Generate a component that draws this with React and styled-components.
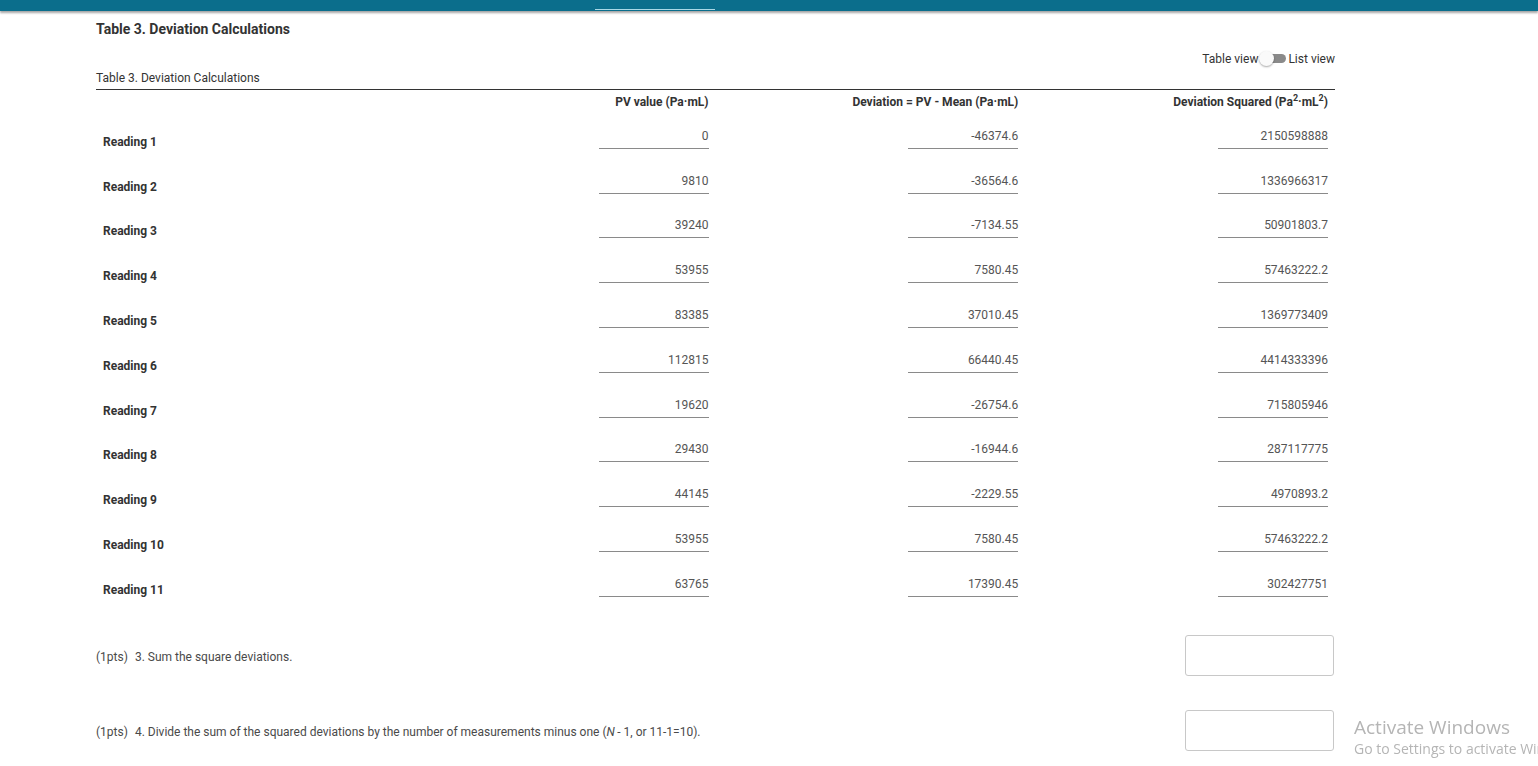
import React from "react";
import styled, { createGlobalStyle } from "styled-components";

const rows = [
  ["0", "-46374.6", "2150598888"],
  ["9810", "-36564.6", "1336966317"],
  ["39240", "-7134.55", "50901803.7"],
  ["53955", "7580.45", "57463222.2"],
  ["83385", "37010.45", "1369773409"],
  ["112815", "66440.45", "4414333396"],
  ["19620", "-26754.6", "715805946"],
  ["29430", "-16944.6", "287117775"],
  ["44145", "-2229.55", "4970893.2"],
  ["53955", "7580.45", "57463222.2"],
  ["63765", "17390.45", "302427751"],
];

const GlobalStyle = createGlobalStyle`
  body {
    margin: 0;
    font-family: Roboto, "Liberation Sans", sans-serif;
    color: #333;
    background: #fff;
    overflow: hidden;
  }
`;

const TopBar = styled.div`
  height: 11px;
  background: #0b6e8c;
  box-shadow: 0 2px 2px rgba(0, 0, 0, 0.35);
  display: flex;
  padding-left: 595px;
  box-sizing: border-box;
  align-items: flex-end;
`;

const TabMark = styled.div`
  width: 120px;
  height: 1px;
  margin-bottom: 1px;
  background: #a9d8e6;
`;

const Page = styled.div`
  width: 1239px;
  margin-left: 96px;
`;

const Title = styled.h2`
  margin: 10px 0 0;
  font-size: 14px;
  font-weight: 700;
  line-height: 16px;
  color: #333;
`;

const ToggleRow = styled.div`
  display: flex;
  justify-content: flex-end;
  align-items: center;
  margin-top: 14px;
  font-size: 12px;
  color: #333;
  line-height: 14px;
`;

const Switch = styled.span`
  position: relative;
  width: 27px;
  height: 15px;
  display: inline-block;
  margin: 0 2px 0 1px;

  &::before {
    content: "";
    position: absolute;
    left: 4px;
    top: 3px;
    width: 23px;
    height: 9px;
    border-radius: 5px;
    background: #8a8a8a;
  }

  &::after {
    content: "";
    position: absolute;
    left: 0;
    top: 0;
    width: 15px;
    height: 15px;
    border-radius: 50%;
    background: #fafafa;
    box-shadow: 0 1px 2px rgba(0, 0, 0, 0.35);
  }
`;

const Table = styled.table`
  width: 100%;
  border-collapse: collapse;
  table-layout: fixed;
  margin-top: 5px;

  caption {
    text-align: left;
    font-size: 12px;
    line-height: 14px;
    padding-bottom: 4px;
    border-bottom: 1px solid #333;
  }
`;

const Th = styled.th`
  font-size: 12px;
  font-weight: 700;
  text-align: right;
  padding: 5px 7px 0;
  height: 14px;
  line-height: 14px;
  color: #333;

  sup {
    font-size: 9px;
    line-height: 0;
  }
`;

const Row = styled.tr`
  height: 44.8px;
`;

const Label = styled.th`
  font-size: 12px;
  font-weight: 700;
  text-align: left;
  padding: 0 7px 5px;
  vertical-align: bottom;
  color: #333;
  line-height: 14px;
`;

const Cell = styled.td`
  padding: 0 7px 5px;
  vertical-align: bottom;
`;

const Value = styled.div`
  width: 110px;
  margin-left: auto;
  font-size: 12px;
  line-height: 14px;
  color: #555;
  padding-top: 1px;
  padding-bottom: 5px;
  border-bottom: 1px solid #8a8a8a;
  text-align: right;
`;

const Question = styled.div`
  display: flex;
  justify-content: space-between;
  align-items: center;
  margin-top: ${(p) => p.$top}px;
  font-size: 12px;
  color: #4a4a4a;
`;

const Prompt = styled.span`
  padding-top: 4px;
`;

const Pts = styled.span`
  margin-right: 7px;
`;

const Answer = styled.input`
  width: 149px;
  height: 41px;
  box-sizing: border-box;
  border: 1px solid #c8c8c8;
  border-radius: 3px;
  margin-right: 1px;
`;

const Watermark = styled.div`
  position: fixed;
  left: 1354px;
  top: 715px;
  font-family: "Open Sans", "Noto Sans", sans-serif;
  color: #b5b5b5;
  white-space: nowrap;

  div:first-child {
    font-size: 19px;
    line-height: 24px;
  }
  div:last-child {
    font-size: 14px;
    line-height: 20px;
  }
`;

export default function App() {
  return (
    <>
      <GlobalStyle />
      <TopBar>
        <TabMark />
      </TopBar>
      <Page>
        <Title>Table 3. Deviation Calculations</Title>
        <ToggleRow>
          Table view
          <Switch />
          List view
        </ToggleRow>
        <Table>
          <caption>Table 3. Deviation Calculations</caption>
          <thead>
            <tr>
              <Th />
              <Th>PV value (Pa·mL)</Th>
              <Th>Deviation = PV - Mean (Pa·mL)</Th>
              <Th>
                Deviation Squared (Pa<sup>2</sup>·mL<sup>2</sup>)
              </Th>
            </tr>
          </thead>
          <tbody>
            {rows.map((r, i) => (
              <Row key={i}>
                <Label>Reading {i + 1}</Label>
                {r.map((v, j) => (
                  <Cell key={j}>
                    <Value>{v}</Value>
                  </Cell>
                ))}
              </Row>
            ))}
          </tbody>
        </Table>
        <Question $top={33}>
          <Prompt>
            <Pts>(1pts)</Pts>3. Sum the square deviations.
          </Prompt>
          <Answer />
        </Question>
        <Question $top={34}>
          <Prompt>
            <Pts>(1pts)</Pts>4. Divide the sum of the squared deviations by the number of
            measurements minus one (<i>N</i>&thinsp;- 1, or 11-1=10).
          </Prompt>
          <Answer />
        </Question>
      </Page>
      <Watermark>
        <div>Activate Windows</div>
        <div>Go to Settings to activate Windows.</div>
      </Watermark>
    </>
  );
}
